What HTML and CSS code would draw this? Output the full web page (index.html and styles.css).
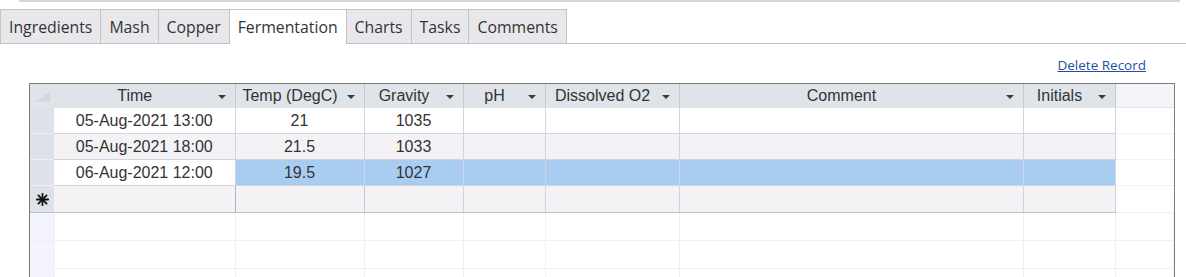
FILE: index.html
```html
<!DOCTYPE html>
<html>
<head>
<meta charset="utf-8">
<link rel="stylesheet" href="styles.css">
</head>
<body>
<div class="topline"></div>
<div class="tabs">
  <div class="tab">Ingredients</div>
  <div class="tab">Mash</div>
  <div class="tab">Copper</div>
  <div class="tab active">Fermentation</div>
  <div class="tab">Charts</div>
  <div class="tab">Tasks</div>
  <div class="tab">Comments</div>
</div>
<div class="actions"><a class="link" href="#">Delete Record</a></div>
<div class="grid">
  <table>
    <colgroup>
      <col class="c-sel"><col class="c-time"><col class="c-temp"><col class="c-grav"><col class="c-ph"><col class="c-do"><col class="c-com"><col class="c-ini"><col>
    </colgroup>
    <thead>
      <tr>
        <th class="corner"><svg width="16" height="13" viewBox="0 0 16 13"><polygon points="1,12 15,12 15,1" fill="#d3d8e0"/></svg></th>
        <th><div class="h"><span>Time</span><i class="arr"></i></div></th>
        <th><div class="h"><span>Temp (DegC)</span><i class="arr"></i></div></th>
        <th><div class="h"><span>Gravity</span><i class="arr"></i></div></th>
        <th><div class="h"><span>pH</span><i class="arr"></i></div></th>
        <th><div class="h"><span>Dissolved O2</span><i class="arr"></i></div></th>
        <th><div class="h"><span>Comment</span><i class="arr"></i></div></th>
        <th><div class="h"><span>Initials</span><i class="arr"></i></div></th>
        <th class="filler"></th>
      </tr>
    </thead>
    <tbody>
      <tr class="r-white">
        <td class="sel"></td><td>05-Aug-2021 13:00</td><td>21</td><td>1035</td><td></td><td></td><td></td><td></td><td class="fill"></td>
      </tr>
      <tr class="r-alt">
        <td class="sel"></td><td>05-Aug-2021 18:00</td><td>21.5</td><td>1033</td><td></td><td></td><td></td><td></td><td class="fill"></td>
      </tr>
      <tr class="r-cur">
        <td class="sel"></td><td class="focus">06-Aug-2021 12:00</td><td>19.5</td><td>1027</td><td></td><td></td><td></td><td></td><td class="fill"></td>
      </tr>
      <tr class="r-new">
        <td class="sel"><svg class="star" width="13" height="13" viewBox="0 0 13 13"><g stroke="#111" stroke-width="1.8" stroke-linecap="round"><line x1="6.5" y1="0.8" x2="6.5" y2="12.2"/><line x1="0.8" y1="6.5" x2="12.2" y2="6.5"/><line x1="2.4" y1="2.4" x2="10.6" y2="10.6"/><line x1="10.6" y1="2.4" x2="2.4" y2="10.6"/></g></svg></td><td></td><td></td><td></td><td></td><td></td><td></td><td></td><td class="fill"></td>
      </tr>
      <tr class="r-empty">
        <td class="sel"></td><td></td><td></td><td></td><td></td><td></td><td></td><td></td><td></td>
      </tr>
      <tr class="r-empty">
        <td class="sel"></td><td></td><td></td><td></td><td></td><td></td><td></td><td></td><td></td>
      </tr>
      <tr class="r-empty">
        <td class="sel"></td><td></td><td></td><td></td><td></td><td></td><td></td><td></td><td></td>
      </tr>
    </tbody>
  </table>
</div>
</body>
</html>
```
FILE: styles.css
```css
html, body {
  margin: 0;
  padding: 0;
  background: #ffffff;
  overflow: hidden;
}
body {
  width: 1186px;
  height: 277px;
  font-family: "Open Sans", "Noto Sans", sans-serif;
  color: #333333;
}
.topline {
  margin-left: 19px;
  width: 1161px;
  height: 2px;
  background: #d4d4d4;
}
.tabs {
  display: flex;
  margin-top: 7px;
  height: 34px;
  border-bottom: 1px solid #c4c4c4;
}
.tab {
  height: 34px;
  box-sizing: border-box;
  padding: 0 8px;
  border: 1px solid #c4c4c4;
  border-left: none;
  border-bottom: none;
  background: #e8e8ec;
  font-size: 15.8px;
  line-height: 35px;
  color: #333;
}
.tab:first-child {
  border-left: 1px solid #c4c4c4;
}
.tab.active {
  background: #ffffff;
  height: 35px;
  position: relative;
  z-index: 1;
}
.actions {
  display: flex;
  justify-content: flex-end;
  padding-right: 40px;
  height: 39px;
  align-items: center;
}
.link {
  font-size: 13.5px;
  color: #1f4f9e;
  text-decoration: underline;
  margin-top: 2px;
}
.grid {
  margin-left: 29px;
  width: 1146px;
  height: 200px;
  border: 1px solid #7c7c7c;
  border-bottom: none;
  box-shadow: inset 1px 1px 0 #b8b8b8, inset -1px 0 0 #b8b8b8;
  padding: 0;
  box-sizing: border-box;
  overflow: hidden;
}
table {
  border-collapse: collapse;
  table-layout: fixed;
  width: 1144px;
  font-family: "Liberation Sans", Arial, sans-serif;
  font-size: 16px;
  color: #333;
}
col.c-sel { width: 24px; }
col.c-time { width: 181px; }
col.c-temp { width: 129px; }
col.c-grav { width: 99px; }
col.c-ph { width: 82px; }
col.c-do { width: 134px; }
col.c-com { width: 344px; }
col.c-ini { width: 92px; }
th {
  height: 23px;
  padding: 0;
  background: #dfe3ea;
  font-weight: normal;
  border-right: 1px solid #c3c8d2;
  border-bottom: 1px solid #dfe3ea;
}
th.corner {
  text-align: right;
  vertical-align: bottom;
  border-right: none;
}
th.corner svg {
  display: block;
  margin: 0 3px 4px auto;
}
th.filler {
  background: #f2f4f9;
  border-right: none;
}
.h {
  display: flex;
  align-items: center;
  height: 23px;
}
.h span {
  flex: 1;
  text-align: center;
  padding-left: 6px;
  white-space: nowrap;
}
.arr {
  width: 0;
  height: 0;
  border-left: 4px solid transparent;
  border-right: 4px solid transparent;
  border-top: 4px solid #3a3a3a;
  margin: 3px 9px 0 8px;
}
td {
  height: 25px;
  padding: 0;
  text-align: center;
  border-right: 1px solid #cdd4e3;
  border-bottom: 1px solid #cdd4e3;
  white-space: nowrap;
  overflow: hidden;
}
td.sel {
  background: #dde2ea;
  border-right: none;
  border-bottom: 1px solid #eef0f5;
}
td.fill {
  background: #ffffff;
  border-right: none;
  border-bottom: 1px solid #f0f1f4;
}
tr.r-white td { background: #ffffff; }
tr.r-alt td { background: #f5f2f5; }
tr.r-cur td { background: #a8cdf0; }
tr.r-cur td.focus { background: #ffffff; }
tr.r-new td { background: #f5f2f5; height: 26px; border-bottom: 1px solid #b9c2d3; }
tr.r-white td.sel, tr.r-alt td.sel, tr.r-cur td.sel { background: #dde2ea; }
tr.r-new td.sel { background: #dde2ea; }
tr td.fill { background: #ffffff; }
tr.r-new td.fill { border-bottom: 1px solid #eef0f4; }
.star {
  display: block;
  margin: 0 auto;
}
tr.r-new td:nth-child(2) { border-right-color: #aeb3bc; }
tr.r-new td:nth-child(3) { border-right-color: #c4c9d3; }
tr.r-empty td {
  height: 27px;
  background: #ffffff;
  border-right: 1px solid #eef0f4;
  border-bottom: 1px solid #eef0f4;
}
tr.r-empty td.sel {
  background: #f4f5fc;
  border-right: 1px solid #eef0f4;
}
```
